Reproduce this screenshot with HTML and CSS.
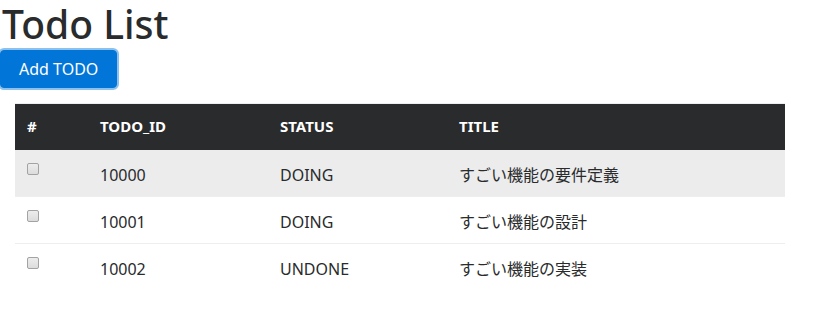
FILE: index.html
```html
<!DOCTYPE html>
<html lang="ja">
<head>
<meta charset="utf-8">
<title>Todo List</title>
<link rel="stylesheet" href="styles.css">
</head>
<body>
<h1 class="title">Todo List</h1>
<button class="btn-add" type="button">Add TODO</button>
<div class="table-wrap">
  <table class="todo-table">
    <colgroup>
      <col class="c1"><col class="c2"><col class="c3"><col class="c4">
    </colgroup>
    <thead>
      <tr><th>#</th><th>TODO_ID</th><th>STATUS</th><th>TITLE</th></tr>
    </thead>
    <tbody>
      <tr class="striped"><td><input class="chk" type="checkbox"></td><td>10000</td><td>DOING</td><td>すごい機能の要件定義</td></tr>
      <tr><td><input class="chk" type="checkbox"></td><td>10001</td><td>DOING</td><td>すごい機能の設計</td></tr>
      <tr><td><input class="chk" type="checkbox"></td><td>10002</td><td>UNDONE</td><td>すごい機能の実装</td></tr>
    </tbody>
  </table>
</div>
</body>
</html>
```

FILE: styles.css
```css
html, body {
  margin: 0;
  padding: 0;
  background: #fff;
}
body {
  font-family: "Noto Sans", "Noto Sans CJK JP", sans-serif;
  font-size: 16px;
  color: #292b2c;
}
.title {
  margin: 0 0 2px 0;
  padding-left: 2px;
  font-size: 39px;
  line-height: 48px;
  font-weight: 500;
}
.btn-add {
  display: block;
  margin: 0;
  height: 38px;
  padding: 0 18px;
  font-family: inherit;
  font-size: 16px;
  color: #fff;
  background: #0275d8;
  border: 1px solid #0275d8;
  border-radius: 4px;
  box-shadow: 0 0 0 2px rgba(2, 117, 216, 0.45);
}
.table-wrap {
  padding: 15px 42px 0 15px;
}
.todo-table {
  width: 770px;
  border-collapse: collapse;
  table-layout: fixed;
}
.c1 { width: 73px; }
.c2 { width: 180px; }
.c3 { width: 179px; }
.c4 { width: 338px; }
.todo-table th,
.todo-table td {
  text-align: left;
  vertical-align: top;
  border-top: 1px solid #eceeef;
}
.todo-table th {
  padding: 12px 12px;
  line-height: 21px;
  background: #292b2c;
  color: #fff;
  font-weight: 700;
  font-size: 15px;
}
.todo-table td {
  padding: 14px 12px 10px 12px;
  line-height: 22px;
}
.todo-table tbody tr:first-child td {
  border-top-color: #292b2c;
}
.striped td {
  background: #ececec;
}
.chk {
  appearance: none;
  -webkit-appearance: none;
  display: block;
  width: 12px;
  height: 12px;
  margin: -1px 0 0 0;
  border: 1px solid #a3a3a3;
  border-radius: 2px;
  background: linear-gradient(#ededed, #dcdcdc);
}
```
